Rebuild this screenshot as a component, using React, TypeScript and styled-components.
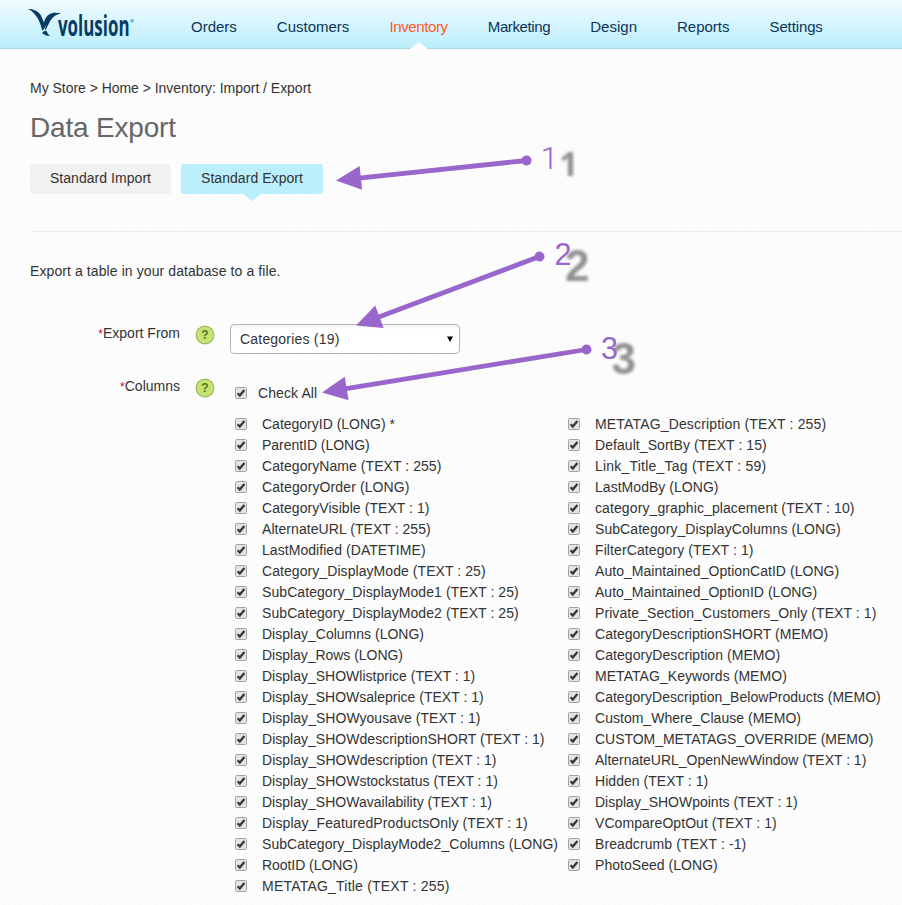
import React from "react";
import styled, { createGlobalStyle } from "styled-components";

const GlobalStyle = createGlobalStyle`
  * { box-sizing: border-box; }
  html, body { margin: 0; padding: 0; }
  body {
    width: 902px;
    height: 905px;
    overflow: hidden;
    background: repeating-linear-gradient(45deg, #fdfdfd 0 2px, #fbfbfb 2px 4px);
    font-family: "Liberation Sans", Arial, sans-serif;
    font-size: 14px;
    color: #333;
  }
`;

const Page = styled.div`
  position: relative;
  width: 902px;
  height: 905px;
  overflow: hidden;
`;

const Header = styled.header`
  display: flex;
  height: 49px;
  padding-left: 27px;
  background: linear-gradient(#f0fbff, #bbeefc);
  border-bottom: 1px solid #a3d8e3;
`;

const Logo = styled.svg`
  width: 110px;
  height: 48px;
  flex: none;
  overflow: visible;
`;

const Nav = styled.nav`
  display: flex;
  gap: 40px;
  margin-left: 54px;
`;

const NavLink = styled.a<{ $active?: boolean; $tracking: number }>`
  position: relative;
  font-size: 15px;
  line-height: 54px;
  height: 48px;
  white-space: nowrap;
  letter-spacing: ${(p) => p.$tracking}px;
  color: ${(p) => (p.$active ? "#ff5a1f" : "#0c3557")};
`;

const NavPointer = styled.svg`
  position: absolute;
  left: 50%;
  bottom: -1px;
  width: 18px;
  height: 7px;
  margin-left: -9px;
`;

const Main = styled.main`
  padding: 30px 0 0 30px;
`;

const Breadcrumb = styled.div`
  height: 18px;
  line-height: 18px;
  letter-spacing: -0.03px;
  white-space: pre;
`;

const Title = styled.h1`
  margin: 14px 0 0;
  height: 34px;
  line-height: 34px;
  font-size: 28px;
  font-weight: 400;
  letter-spacing: -0.18px;
  color: #666;
`;

const Tabs = styled.div`
  display: flex;
  gap: 10px;
  margin-top: 19px;
  padding-bottom: 37px;
  border-bottom: 1px solid #ececec;
`;

const Tab = styled.button<{ $active?: boolean; $width: number }>`
  position: relative;
  width: ${(p) => p.$width}px;
  height: 30px;
  padding: 0 0 2px;
  border: 0;
  border-radius: 3px;
  font: inherit;
  letter-spacing: 0.05px;
  color: #333;
  background: ${(p) => (p.$active ? "#bbeffc" : "#f1f1f1")};
`;

const TabPointer = styled.svg`
  position: absolute;
  left: 50%;
  top: 30px;
  width: 18px;
  height: 7px;
  margin-left: -9px;
`;

const Intro = styled.p`
  margin: 30px 0 0;
  height: 18px;
  line-height: 18px;
  letter-spacing: 0.09px;
`;

const FormRow = styled.div<{ $top: number }>`
  display: grid;
  grid-template-columns: 150px 50px 1fr;
  margin-top: ${(p) => p.$top}px;
`;

const Label = styled.label`
  text-align: right;
  line-height: 18px;
`;

const Required = styled.span`
  font-size: 12px;
  color: #c8102e;
`;

const Help = styled.span`
  display: flex;
  align-items: center;
  justify-content: center;
  width: 18px;
  height: 18px;
  margin: 2px 0 0 16px;
  border: 1px solid #9fba5c;
  border-radius: 50%;
  background: #c5e26c;
  box-shadow: 0 0 0 0.5px #adc56e, inset 0 0 0 1px #d3eb8a;
  color: #54782a;
  font-size: 12px;
  font-weight: 700;
  line-height: 16px;
`;

const SelectBox = styled.div`
  display: flex;
  align-items: center;
  justify-content: space-between;
  width: 230px;
  height: 30px;
  padding: 0 6px 0 9px;
  border: 1px solid #b5b5b5;
  border-radius: 4px;
  background: linear-gradient(#f3f3f3, #fff 5px);
  letter-spacing: 0.2px;
`;

const Caret = styled.svg`
  width: 6px;
  height: 6px;
  margin-bottom: 1px;
`;

const CheckList = styled.div`
  display: flex;
  flex-direction: column;
`;

const CheckItem = styled.label<{ $gap: number; $tracking: number }>`
  display: flex;
  align-items: center;
  gap: ${(p) => p.$gap}px;
  height: 21px;
  white-space: pre;
  letter-spacing: ${(p) => p.$tracking}px;
`;

const Columns = styled.div`
  display: grid;
  grid-template-columns: 333px 333px;
  margin-top: 10px;
`;

const Fields = styled.div`
  padding: 5px 0 0 5px;
`;

const Tick = styled.svg`
  width: 12px;
  height: 12px;
  margin: 1px 1px 0 0;
  flex: none;
`;

const Annotations = styled.svg`
  position: absolute;
  inset: 0;
  pointer-events: none;
`;

type Entry = [text: string, adjust: number];

const nav: Entry[] = [
  ["Orders", 0],
  ["Customers", 0],
  ["Inventory", -0.37],
  ["Marketing", -0.37],
  ["Design", 0],
  ["Reports", 0],
  ["Settings", -0.12],
];

// Each column name carries the extra width, in pixels, spread over its letters.
const left: Entry[] = [
  ["CategoryID (LONG) *", -2],
  ["ParentID (LONG)", -2],
  ["CategoryName (TEXT : 255)", -1],
  ["CategoryOrder (LONG)", 0],
  ["CategoryVisible (TEXT : 1)", -1],
  ["AlternateURL (TEXT : 255)", -1],
  ["LastModified (DATETIME)", -1],
  ["Category_DisplayMode (TEXT : 25)", -1],
  ["SubCategory_DisplayMode1 (TEXT : 25)", -1],
  ["SubCategory_DisplayMode2 (TEXT : 25)", -1],
  ["Display_Columns (LONG)", -2],
  ["Display_Rows (LONG)", -2.5],
  ["Display_SHOWlistprice (TEXT : 1)", -3],
  ["Display_SHOWsaleprice (TEXT : 1)", -3],
  ["Display_SHOWyousave (TEXT : 1)", -2],
  ["Display_SHOWdescriptionSHORT (TEXT : 1)", -3],
  ["Display_SHOWdescription (TEXT : 1)", -2],
  ["Display_SHOWstockstatus (TEXT : 1)", -3],
  ["Display_SHOWavailability (TEXT : 1)", -3],
  ["Display_FeaturedProductsOnly (TEXT : 1)", 0],
  ["SubCategory_DisplayMode2_Columns (LONG)", -2],
  ["RootID (LONG)", -2],
  ["METATAG_Title (TEXT : 255)", 3],
];

const right: Entry[] = [
  ["METATAG_Description (TEXT : 255)", 2],
  ["Default_SortBy (TEXT : 15)", -1],
  ["Link_Title_Tag (TEXT : 59)", 3],
  ["LastModBy (LONG)", -1],
  ["category_graphic_placement (TEXT : 10)", 0],
  ["SubCategory_DisplayColumns (LONG)", -1],
  ["FilterCategory (TEXT : 1)", 0],
  ["Auto_Maintained_OptionCatID (LONG)", -2],
  ["Auto_Maintained_OptionID (LONG)", -2],
  ["Private_Section_Customers_Only (TEXT : 1)", -1],
  ["CategoryDescriptionSHORT (MEMO)", -2],
  ["CategoryDescription (MEMO)", -1],
  ["METATAG_Keywords (MEMO)", -1],
  ["CategoryDescription_BelowProducts (MEMO)", -3],
  ["Custom_Where_Clause (MEMO)", -2],
  ["CUSTOM_METATAGS_OVERRIDE (MEMO)", -4.5],
  ["AlternateURL_OpenNewWindow (TEXT : 1)", -4.5],
  ["Hidden (TEXT : 1)", -1],
  ["Display_SHOWpoints (TEXT : 1)", -3],
  ["VCompareOptOut (TEXT : 1)", -1],
  ["Breadcrumb (TEXT : -1)", 0],
  ["PhotoSeed (LONG)", -1],
];

function Check({ text, adjust = 0, gap = 14 }: { text: string; adjust?: number; gap?: number }) {
  return (
    <CheckItem $gap={gap} $tracking={0.1 + adjust / text.length}>
      <Tick viewBox="0 0 12 12">
        <rect x="0.5" y="0.5" width="11" height="11" rx="1.2" fill="#e4e4e4" stroke="#a3a3a3" />
        <path d="M2.6 6.3 L4.8 8.6 L9.4 3" fill="none" stroke="#383838" strokeWidth="2.3" />
      </Tick>
      <span>{text}</span>
    </CheckItem>
  );
}

const arrows = [
  { from: [526.5, 160.5], to: [336, 180.5] },
  { from: [539.5, 256.5], to: [356, 325.5] },
  { from: [586.5, 349.5], to: [322, 392.5] },
];

function Arrow({ from, to }: { from: number[]; to: number[] }) {
  const dx = to[0] - from[0];
  const dy = to[1] - from[1];
  const length = Math.hypot(dx, dy);
  const angle = (Math.atan2(dy, dx) * 180) / Math.PI;
  return (
    <g transform={`translate(${from[0]} ${from[1]}) rotate(${angle})`} fill="#9966cc">
      <circle r="5" />
      <rect y="-2.4" width={length - 23} height="4.8" />
      <path d={`M${length} 0 l-25 -12 v24 z`} />
    </g>
  );
}

export default function App() {
  return (
    <>
      <GlobalStyle />
      <Page>
        <Header>
          <Logo viewBox="27 0 110 48" fill="#063b62">
            <path d="M28 9 C33 8.6 38 11 40.7 15 L44 22.5 C45 18.5 46.5 16.5 48.3 15 C51.5 12.5 56 12.4 61.3 13.3 C54.5 15 51.5 18.5 49.3 22.7 L45.8 29.8 L44.6 29.6 L46.4 25 L42.5 31 C40.8 25.5 39.5 20.5 36.7 16.7 C34 13 31.5 10.5 28 9Z" />
            <path d="M44.4 30.8 L46.5 31 L48 34 L50 35.8 H46.8 L42 33.3 Z" />
            <text
              x="58"
              y="36"
              fontFamily='"Open Sans", sans-serif'
              fontSize="28"
              fontWeight="700"
              textLength="71.5"
              lengthAdjust="spacingAndGlyphs"
            >
              volusion
            </text>
            <circle cx="132" cy="20.8" r="1.8" fill="#7fb0c6" />
          </Logo>
          <Nav>
            {nav.map(([name, tracking]) => (
              <NavLink key={name} $active={name === "Inventory"} $tracking={tracking}>
                {name}
                {name === "Inventory" && (
                  <NavPointer viewBox="0 0 18 7"><path d="M0 7 L9 0 L18 7Z" fill="#fff" /></NavPointer>
                )}
              </NavLink>
            ))}
          </Nav>
        </Header>
        <Main>
          <Breadcrumb>My Store &gt; Home &gt; Inventory: Import / Export</Breadcrumb>
          <Title>Data Export</Title>
          <Tabs>
            <Tab $width={141}>Standard Import</Tab>
            <Tab $width={142} $active>
              Standard Export
              <TabPointer viewBox="0 0 18 7"><path d="M0 0 H18 L9 7Z" fill="#bbeffc" /></TabPointer>
            </Tab>
          </Tabs>
          <Intro>Export a table in your database to a file.</Intro>
          <FormRow $top={44}>
            <Label><Required>*</Required>Export From</Label>
            <Help>?</Help>
            <SelectBox>
              <span>Categories (19)</span>
              <Caret viewBox="0 0 6 6"><path d="M0 0.5 H6 L3 6Z" fill="#000" /></Caret>
            </SelectBox>
          </FormRow>
          <FormRow $top={23}>
            <Label><Required>*</Required>Columns</Label>
            <Help>?</Help>
            <Fields>
              <Check text="Check All" gap={10} />
              <Columns>
                <CheckList>{left.map(([t, a]) => <Check key={t} text={t} adjust={a} />)}</CheckList>
                <CheckList>{right.map(([t, a]) => <Check key={t} text={t} adjust={a} />)}</CheckList>
              </Columns>
            </Fields>
          </FormRow>
        </Main>
        <Annotations width="902" height="905" viewBox="0 0 902 905">
          <defs>
            <filter id="soft" x="-50%" y="-50%" width="200%" height="200%"><feGaussianBlur stdDeviation="1.6" /></filter>
          </defs>
          {arrows.map((a, i) => <Arrow key={i} {...a} />)}
          <g filter="url(#soft)" fill="#909090" fontWeight="700">
            <text x="559" y="176" fontSize="34" fontFamily='"Open Sans", sans-serif'>1</text>
            <text x="565" y="280.5" fontSize="44">2</text>
            <text x="611.5" y="373.5" fontSize="44">3</text>
          </g>
          <g fill="#9966cc" fontSize="32">
            <text x="540.5" y="169" fontFamily="Roboto, sans-serif" fontWeight="300">1</text>
            <text x="554.5" y="265" textLength="17" lengthAdjust="spacingAndGlyphs">2</text>
            <text x="601" y="359" textLength="17" lengthAdjust="spacingAndGlyphs">3</text>
          </g>
        </Annotations>
      </Page>
    </>
  );
}
